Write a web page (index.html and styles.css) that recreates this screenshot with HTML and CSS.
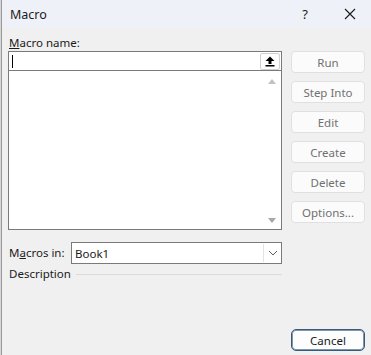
FILE: index.html
```html
<!DOCTYPE html>
<html lang="en">
<head>
    <meta charset="UTF-8">
    <title>Macro</title>
    <link rel="stylesheet" href="styles.css">
</head>
<body>
    <div class="sheet"></div>
    <div class="dialog">
        <div class="titlebar">
            <span class="title">Macro</span>
            <span class="help">?</span>
            <svg class="close" width="12" height="12" viewBox="0 0 12 12">
                <path d="M1 1 L11 11 M11 1 L1 11" stroke="#1a1a1a" stroke-width="1.1" fill="none"/>
            </svg>
        </div>
        <div class="content">
            <div class="main">
                <div class="label"><u>M</u>acro name:</div>
                <div class="namebox">
                    <span class="caret"></span>
                    <span class="collapse">
                        <svg width="12" height="12" viewBox="0 0 12 12">
                            <path d="M6 1.5 L10.5 6 L7.5 6 L7.5 9 L4.5 9 L4.5 6 L1.5 6 Z" fill="#000"/>
                            <rect x="1.5" y="10" width="9" height="1.5" fill="#000"/>
                        </svg>
                    </span>
                </div>
                <div class="listbox">
                    <div class="scroll">
                        <span class="arrow up"></span>
                        <span class="arrow down"></span>
                    </div>
                </div>
                <div class="row macros-in">
                    <span class="label">M<u>a</u>cros in:</span>
                    <div class="select">
                        <span class="value">Book1</span>
                        <span class="drop">
                            <svg width="10" height="6" viewBox="0 0 10 6">
                                <path d="M1 1 L5 5 L9 1" stroke="#606060" stroke-width="1" fill="none"/>
                            </svg>
                        </span>
                    </div>
                </div>
                <div class="row description">
                    <span class="label">Description</span>
                    <span class="rule"></span>
                </div>
            </div>
            <div class="side">
                <button class="btn">Run</button>
                <button class="btn">Step Into</button>
                <button class="btn">Edit</button>
                <button class="btn">Create</button>
                <button class="btn">Delete</button>
                <button class="btn">Options...</button>
                <button class="btn cancel">Cancel</button>
            </div>
        </div>
    </div>
</body>
</html>
```
FILE: styles.css
```css
body {
    margin: 0;
    width: 371px;
    height: 355px;
    overflow: hidden;
    display: flex;
    font-family: "Noto Sans", "Open Sans", sans-serif;
    font-size: 11.5px;
    color: #1a1a1a;
    background-color: #f0f0f0;
}

.sheet {
    width: 2px;
    background-color: #d6d6d6;
    border-right: 1px solid #9a9a9a;
}

.dialog {
    flex: 1;
    display: flex;
    flex-direction: column;
}

.titlebar {
    height: 28px;
    display: flex;
    align-items: center;
    background-color: #eff1f8;
    padding-left: 8px;
}

.title {
    font-size: 12.5px;
    flex: 1;
}

.help {
    font-size: 13px;
    margin-right: 36px;
}

.close {
    margin-right: 15px;
}

.content {
    flex: 1;
    display: flex;
    gap: 9px;
    padding: 7px 6px 4px 6px;
}

.main {
    width: 274px;
    display: flex;
    flex-direction: column;
}

.label {
    line-height: 16px;
    height: 16px;
    padding-left: 1px;
}

.namebox {
    height: 18px;
    border: 1px solid #7a7a7a;
    background-color: #fff;
    display: flex;
    align-items: center;
    justify-content: space-between;
    padding: 0 1px 0 3px;
}

.caret {
    width: 1px;
    height: 13px;
    background-color: #000;
}

.collapse {
    width: 18px;
    height: 15px;
    border: 1px solid #d0d0d0;
    border-radius: 2px;
    display: flex;
    align-items: center;
    justify-content: center;
    background-color: #fdfdfd;
}

.listbox {
    height: 158px;
    border: 1px solid #7a7a7a;
    border-top: none;
    background-color: #fff;
    display: flex;
    justify-content: flex-end;
}

.scroll {
    width: 18px;
    display: flex;
    flex-direction: column;
    justify-content: space-between;
    align-items: center;
    padding: 8px 0 6px 0;
}

.arrow {
    width: 0;
    height: 0;
    border-left: 4px solid transparent;
    border-right: 4px solid transparent;
}

.arrow.up {
    border-bottom: 5px solid #c2c2c2;
}

.arrow.down {
    border-top: 5px solid #a8a8a8;
}

.row {
    display: flex;
    align-items: center;
}

.macros-in {
    margin-top: 12px;
    height: 22px;
}

.macros-in .label {
    width: 62px;
}

.select {
    flex: 1;
    height: 20px;
    border: 1px solid #7a7a7a;
    background-color: #fff;
    display: flex;
    align-items: center;
    justify-content: space-between;
}

.value {
    padding-left: 3px;
}

.drop {
    width: 17px;
    height: 18px;
    border-left: 1px solid #e3e3e3;
    display: flex;
    align-items: center;
    justify-content: center;
}

.description {
    margin-top: 2px;
    height: 16px;
}

.rule {
    flex: 1;
    height: 1px;
    background-color: #dadada;
    margin-left: 5px;
}

.side {
    width: 74px;
    display: flex;
    flex-direction: column;
    gap: 8px;
    padding-top: 16px;
}

.btn {
    height: 22px;
    font-family: inherit;
    font-size: 11.5px;
    color: #707070;
    background-color: #fbfbfb;
    border: 1px solid #e0e0e0;
    border-radius: 4px;
    padding: 0;
}

.cancel {
    margin-top: auto;
    color: #1a1a1a;
    background-color: #fdfdfd;
    border: 1px solid #3c5a78;
    border-radius: 5px;
    box-shadow: inset 0 0 0 1px #7d96b0;
}
```
